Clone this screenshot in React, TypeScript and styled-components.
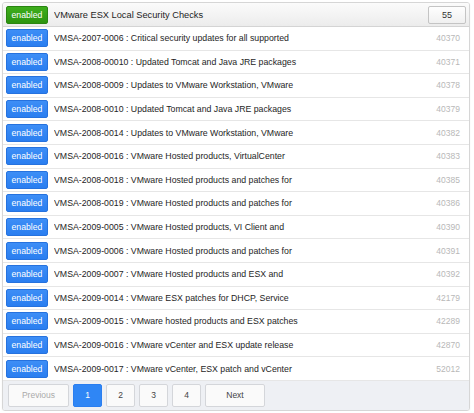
import React from 'react';
import styled, { createGlobalStyle } from 'styled-components';

const rows: [string, number][] = [
  ['VMSA-2007-0006 : Critical security updates for all supported', 40370],
  ['VMSA-2008-00010 : Updated Tomcat and Java JRE packages', 40371],
  ['VMSA-2008-0009 : Updates to VMware Workstation, VMware', 40378],
  ['VMSA-2008-0010 : Updated Tomcat and Java JRE packages', 40379],
  ['VMSA-2008-0014 : Updates to VMware Workstation, VMware', 40382],
  ['VMSA-2008-0016 : VMware Hosted products, VirtualCenter', 40383],
  ['VMSA-2008-0018 : VMware Hosted products and patches for', 40385],
  ['VMSA-2008-0019 : VMware Hosted products and patches for', 40386],
  ['VMSA-2009-0005 : VMware Hosted products, VI Client and', 40390],
  ['VMSA-2009-0006 : VMware Hosted products and patches for', 40391],
  ['VMSA-2009-0007 : VMware Hosted products and ESX and', 40392],
  ['VMSA-2009-0014 : VMware ESX patches for DHCP, Service', 42179],
  ['VMSA-2009-0015 : VMware hosted products and ESX patches', 42289],
  ['VMSA-2009-0016 : VMware vCenter and ESX update release', 42870],
  ['VMSA-2009-0017 : VMware vCenter, ESX patch and vCenter', 52012],
];

const Global = createGlobalStyle`
  body {
    margin: 0;
    background: #fff;
    font-family: "Liberation Sans", Arial, sans-serif;
  }
`;

const Panel = styled.div`
  margin: 2px 4px 0 2px;
  border: 1px solid #d6d6d6;
  border-radius: 3px;
  overflow: hidden;
  box-shadow: 0 1px 2px rgba(0,0,0,.06);
`;

const Header = styled.div`
  height: 23px;
  display: flex;
  align-items: center;
  padding: 0 3px 0 3px;
  background: linear-gradient(#fbfbfb, #ececec);
  border-bottom: 1px solid #d4d4d4;
`;

const Row = styled.div`
  height: 22.6px;
  display: flex;
  align-items: center;
  padding: 0 9px 0 3px;
  border-bottom: 1px solid #e6e6e6;
  background: #fff;
`;

const Badge = styled.span<{ green?: boolean }>`
  width: 42px;
  height: 18px;
  flex: none;
  display: grid;
  place-items: center;
  border-radius: 2px;
  font-size: 8.7px;
  color: #fff;
  background: ${({ green }) => (green ? 'linear-gradient(#3fae1d, #2c9410)' : 'linear-gradient(#3d8ef6, #2a7ef0)')};
  border: 1px solid ${({ green }) => (green ? '#2a8512' : '#2672de')};
  box-sizing: border-box;
`;

const Title = styled.span<{ big?: boolean }>`
  flex: 1;
  margin-left: 6px;
  font-size: ${({ big }) => (big ? '9.25px' : '8.75px')};
  color: #1e1e1e;
  white-space: nowrap;
  overflow: hidden;
`;

const Num = styled.span`
  font-size: 8.5px;
  color: #b8b8b8;
`;

const Count = styled.span`
  width: 38px;
  height: 18px;
  display: grid;
  place-items: center;
  box-sizing: border-box;
  border: 1px solid #c4c4c4;
  border-radius: 2px;
  background: linear-gradient(#fefefe, #f0f0f0);
  font-size: 9px;
  color: #333;
`;

const Pager = styled.div`
  height: 29px;
  display: flex;
  align-items: center;
  gap: 4px;
  padding: 0 5px;
  background: #eef0f4;
`;

const PageBtn = styled.button<{ w: number; active?: boolean; muted?: boolean }>`
  width: ${({ w }) => w}px;
  height: 23px;
  padding: 0;
  box-sizing: border-box;
  border-radius: 2px;
  font-family: inherit;
  font-size: 8.5px;
  border: 1px solid ${({ active }) => (active ? '#2a7ef0' : '#d4d6da')};
  background: ${({ active }) => (active ? '#2f86f5' : '#fafafa')};
  color: ${({ active, muted }) => (active ? '#fff' : muted ? '#aaa' : '#444')};
`;

export default function App() {
  return (
    <>
      <Global />
      <Panel>
        <Header>
          <Badge green>enabled</Badge>
          <Title big>VMware ESX Local Security Checks</Title>
          <Count>55</Count>
        </Header>
        {rows.map(([t, n]) => (
          <Row key={n}>
            <Badge>enabled</Badge>
            <Title>{t}</Title>
            <Num>{n}</Num>
          </Row>
        ))}
        <Pager>
          <PageBtn w={61} muted>Previous</PageBtn>
          <PageBtn w={29} active>1</PageBtn>
          <PageBtn w={29}>2</PageBtn>
          <PageBtn w={29}>3</PageBtn>
          <PageBtn w={29}>4</PageBtn>
          <PageBtn w={60}>Next</PageBtn>
        </Pager>
      </Panel>
    </>
  );
}
